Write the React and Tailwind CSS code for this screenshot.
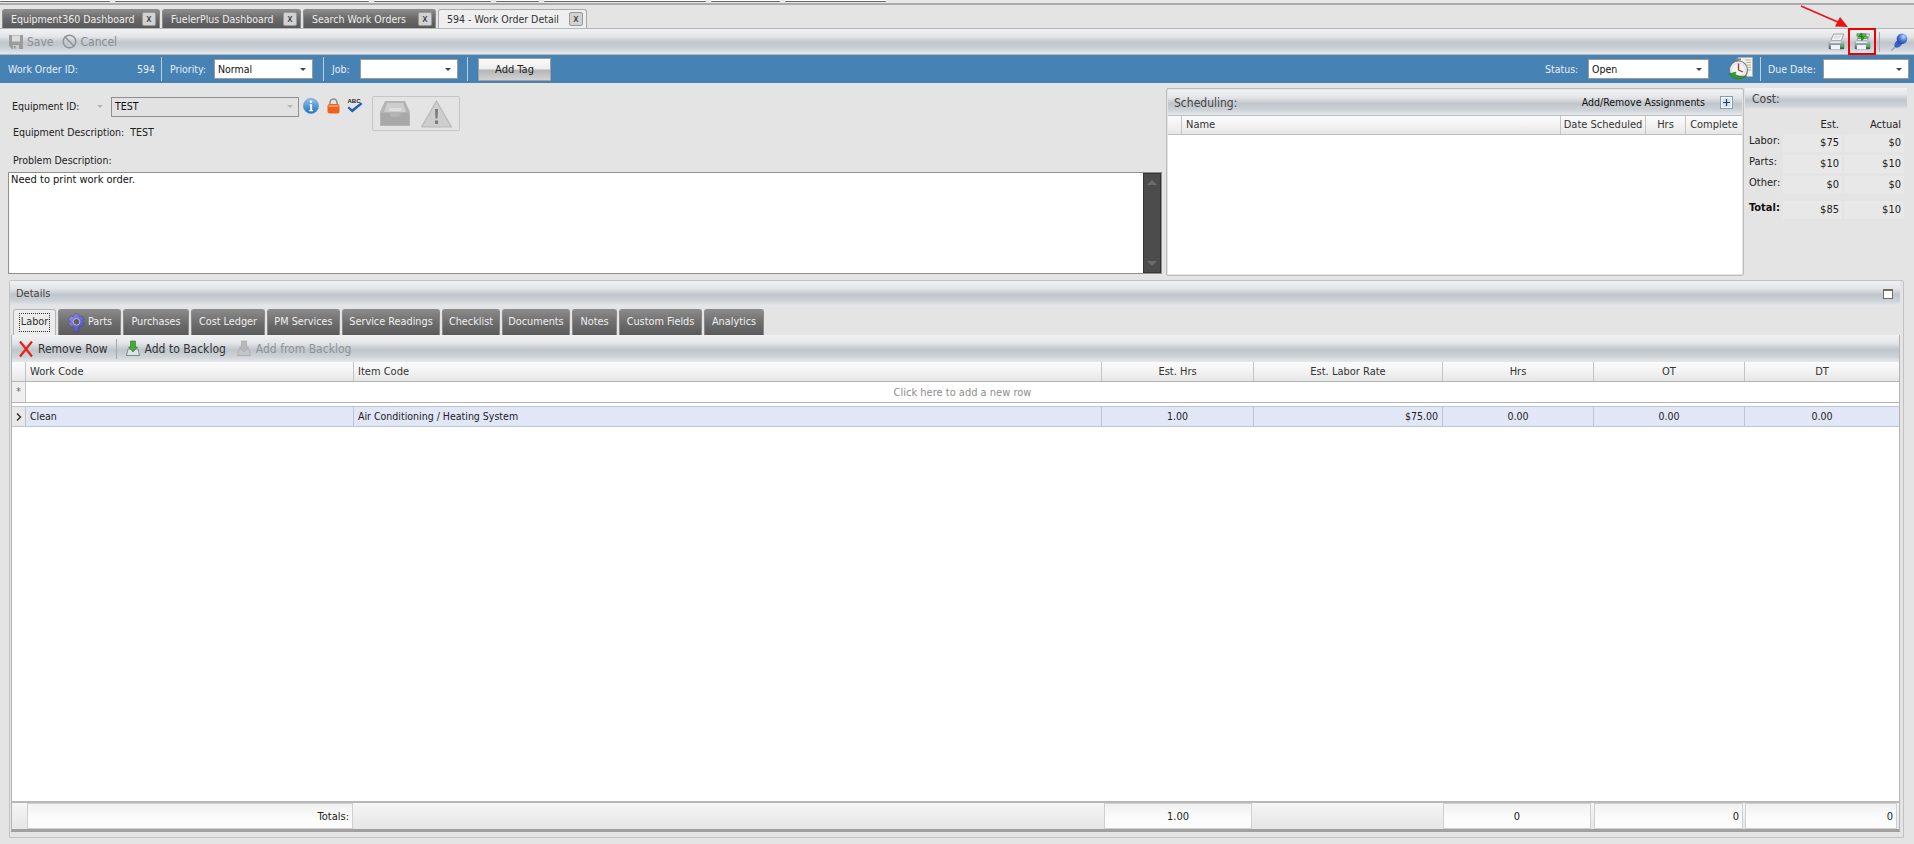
import { Ban } from 'lucide-react';

const bar = "bg-[linear-gradient(180deg,#f1f2f4_0%,#e3e5e8_30%,#c9ced3_48%,#bfc5cb_55%,#ced3d8_80%,#e6e8eb_100%)]";
const head = "bg-[linear-gradient(180deg,#fbfbfb_0%,#f3f3f3_50%,#e6e6e6_100%)]";

const topSegments = [110, 254, 117, 43, 162, 69, 101];
const pageTabs = [
  { label: 'Equipment360 Dashboard', w: 'w-[158px]' },
  { label: 'FuelerPlus Dashboard', w: 'w-[139px]' },
  { label: 'Search Work Orders', w: 'w-[133px]' },
  { label: '594 - Work Order Detail', w: 'w-[149px]', active: true },
];
const detailTabs = [
  { label: 'Parts', w: 'w-[63px]', gear: true },
  { label: 'Purchases', w: 'w-[66px]' },
  { label: 'Cost Ledger', w: 'w-[74px]' },
  { label: 'PM Services', w: 'w-[73px]' },
  { label: 'Service Readings', w: 'w-[98px]' },
  { label: 'Checklist', w: 'w-[58px]' },
  { label: 'Documents', w: 'w-[68px]' },
  { label: 'Notes', w: 'w-[45px]' },
  { label: 'Custom Fields', w: 'w-[83px]' },
  { label: 'Analytics', w: 'w-[60px]' },
];
const gridCols = "grid grid-cols-[14px_328px_748px_152px_189px_151px_151px_154px]";
const costRows = [
  { label: 'Labor:', est: '$75', actual: '$0', cls: 'mt-[1px]' },
  { label: 'Parts:', est: '$10', actual: '$10', cls: 'mt-[3px]' },
  { label: 'Other:', est: '$0', actual: '$0', cls: 'mt-[3px]' },
  { label: 'Total:', est: '$85', actual: '$10', cls: 'mt-[7px]', bold: true },
];

function Caret({ color = 'border-t-[#444]' }) {
  return <span className={`block h-0 w-0 border-x-[3px] border-t-[3px] border-x-transparent ${color}`} />;
}

function Select({ w, value }) {
  return (
    <div className={`flex h-[20px] ${w} items-center justify-between rounded-[1px] border border-[#9a9a9a] bg-white pl-[3px] pr-[6px] text-[#111]`}>
      <span>{value}</span>
      <Caret />
    </div>
  );
}

function Sep({ cls = 'bg-[#b9cfe2]' }) {
  return <span className={`block h-[24px] w-px ${cls}`} />;
}

function SaveIcon() {
  return (
    <svg width="16" height="16" viewBox="0 0 16 16">
      <path d="M1 1h14v14H4l-3-3z" fill="#9a9c9e" />
      <path d="M4 1.500h8v6H4z" fill="#dcdddd" />
      <path d="M5 11h6v4H5z" fill="#c9caca" />
      <path d="M6 12h1.500v2.500H6z" fill="#8d8f90" />
    </svg>
  );
}

function Printer({ dollar }) {
  const id = dollar ? 'pb2' : 'pb1';
  return (
    <svg width="17" height="17" viewBox="0 0 24 24">
      <defs>
        <linearGradient id={id} x1="0" y1="0" x2="0" y2="1">
          <stop offset="0" stopColor="#c2cbd4" />
          <stop offset="0.500" stopColor="#8b96a0" />
          <stop offset="1" stopColor="#3d4750" />
        </linearGradient>
      </defs>
      <path d="M8 1.500h14l-3 9H4z" fill="#f7f9fb" stroke="#717c87" strokeWidth="1" />
      <path d="M8.500 4.500h10M7.500 7h10" stroke="#b9c2cb" strokeWidth="1" />
      <path d="M1 10.500h22v10.500a2 2 0 0 1-2 2H3a2 2 0 0 1-2-2z" fill={`url(#${id})`} />
      <path d="M3 12h15v2H3z" fill="#eef1f4" />
      <path d="M4 17h13v6H4z" fill="#f2f4f6" />
      <path d="M18.500 16h3.500v3.500h-3.500z" fill="#1fdc1f" />
      {dollar && <path d="M4 1h13v3.500H4zM6 4.500h13v3.500H6z" fill="#6cc257" stroke="#2e7f2e" strokeWidth="0.700" />}
      {dollar && <path d="M11.500 1.500Q8 1 8 3.500q0 2 3 2t3 2q0 2-3.500 1.500M11 0v11" fill="none" stroke="#1f6a24" strokeWidth="1.300" />}
    </svg>
  );
}

function Pin() {
  return (
    <svg width="17" height="18" viewBox="0 0 17 18">
      <defs>
        <radialGradient id="pinb" cx="0.650" cy="0.300" r="0.750">
          <stop offset="0" stopColor="#c4d8fb" />
          <stop offset="0.500" stopColor="#4f7fe0" />
          <stop offset="1" stopColor="#1c3f9e" />
        </radialGradient>
      </defs>
      <path d="M0.500 17.500L6 12" stroke="#98a1ab" strokeWidth="1.500" />
      <ellipse cx="7.500" cy="10.500" rx="5" ry="3.200" transform="rotate(-45 7.500 10.500)" fill="#3560c4" />
      <circle cx="11" cy="5.800" r="5.300" fill="url(#pinb)" />
    </svg>
  );
}

function ClockDoc() {
  return (
    <svg width="25" height="24" viewBox="0 0 25 24">
      <path d="M10 0.500h14.500v19H10z" fill="#f3f1e8" stroke="#b5b1a0" strokeWidth="0.700" />
      <path d="M17 3h6M18 5.500h5M19 8h4M20 10.500h3M20 13h3" stroke="#a9a593" strokeWidth="0.800" />
      <circle cx="10.500" cy="13" r="9" fill="#f4f6f6" stroke="#6c7a84" strokeWidth="1.200" />
      <circle cx="10.500" cy="13" r="6.800" fill="none" stroke="#cdd5da" strokeWidth="0.800" />
      <path d="M10.500 13V6.500M10.500 13l4.500 2" stroke="#c9281d" strokeWidth="1.300" />
      <path d="M1 17q7 9 18 2-8 1-12-1.500l1-2.500z" fill="#2e9a2a" stroke="#1e6e1c" strokeWidth="0.500" />
      <path d="M8 1.500h5v2H8z" fill="#7a858c" />
    </svg>
  );
}

function InfoIcon() {
  return (
    <svg width="16" height="16" viewBox="0 0 16 16">
      <defs>
        <linearGradient id="infob" x1="0" y1="0" x2="0" y2="1">
          <stop offset="0" stopColor="#8fc3ee" />
          <stop offset="1" stopColor="#1f70bd" />
        </linearGradient>
      </defs>
      <circle cx="8" cy="8" r="7.600" fill="url(#infob)" stroke="#5b93c4" strokeWidth="0.600" />
      <circle cx="8" cy="3.800" r="1.300" fill="#fff" />
      <path d="M6.500 6.300h2.600v5.700h1v1.200H6.200V12h1V7.500h-.7z" fill="#fff" />
    </svg>
  );
}

function LockIcon() {
  return (
    <svg width="13" height="16" viewBox="0 0 13 16">
      <path d="M3 7V4.500a3.500 3.500 0 0 1 7 0V7" fill="none" stroke="#8b8f93" strokeWidth="1.600" />
      <rect x="0.500" y="6" width="12" height="9.500" rx="2" fill="#f0621c" />
      <path d="M1.500 7h10v2h-10z" fill="#f99662" />
    </svg>
  );
}

function SpellIcon() {
  return (
    <svg width="16" height="16" viewBox="0 0 16 16">
      <text x="0.500" y="5.500" fontSize="6" fontWeight="700" fill="#222" fontFamily="Liberation Sans, sans-serif">ABC</text>
      <path d="M2 9.500l3 2.800L13.800 5.500 15.500 7 5.200 15.500 0.500 11z" fill="#2458b8" />
    </svg>
  );
}

function InboxIcon() {
  return (
    <svg width="30" height="27" viewBox="0 0 30 27">
      <path d="M5 1h20l5 11v14H0V12z" fill="#b4b4b4" />
      <path d="M7 3h16l3 9H4z" fill="#cdcdcd" />
      <path d="M9 8h12v3H9z" fill="#dedede" />
      <path d="M1 13h8l2 4h8l2-4h8v12H1z" fill="#a8a8a8" />
    </svg>
  );
}

function WarnIcon() {
  return (
    <svg width="31" height="28" viewBox="0 0 31 28">
      <path d="M15.500 1L30.500 27H.500z" fill="#cdcdcd" stroke="#b8b8b8" strokeWidth="1.200" strokeLinejoin="round" />
      <path d="M14 9h3l-.5 9.500h-2zM14 20.500h3V24h-3z" fill="#7b7b7b" />
    </svg>
  );
}

function PlusBox() {
  return (
    <span className="relative block h-[13px] w-[13px] border border-[#7f9db9] bg-[#dbe3ec] shadow-[inset_0_0_0_1px_#fff]">
      <svg width="11" height="11" viewBox="0 0 11 11"><path d="M5.500 2v7M2 5.500h7" stroke="#1d3f73" strokeWidth="1.200" /></svg>
    </span>
  );
}

function GearIcon() {
  return (
    <svg width="19" height="20" viewBox="0 0 24 24">
      <defs>
        <linearGradient id="gearb" x1="0" y1="0" x2="1" y2="1">
          <stop offset="0" stopColor="#9b94f0" />
          <stop offset="1" stopColor="#4a43b0" />
        </linearGradient>
      </defs>
      <path d="M9.500 0.500h5l1 3.500 3.500-1 3 4.500-2.500 2.500 2.500 2.500-3 4.500-3.500-1-1 7h-5l-1-7-3.500 1-3-4.500L4.500 10 2 7.500l3-4.500 3.500 1z" fill="url(#gearb)" stroke="#3e3a92" strokeWidth="0.500" />
      <circle cx="12" cy="10.500" r="4.200" fill="#5e5e5e" stroke="#c9c6f4" strokeWidth="1" />
    </svg>
  );
}

function RedX() {
  return (
    <svg width="14" height="18" viewBox="0 0 14 18">
      <path d="M1 1.500l12 15M13 1.500l-12 15" stroke="#e3231b" strokeWidth="2.200" />
    </svg>
  );
}

function BacklogIcon({ muted }) {
  return (
    <svg width="14" height="17" viewBox="0 0 14 17">
      <path d="M2 9L0.500 15.500h13L12 9z" fill={muted ? '#c2c4c6' : '#dfe3e6'} stroke={muted ? '#a9abad' : '#6c7278'} strokeWidth="0.800" />
      <path d="M4.500 1h5v6h2L7 12 2.500 7h2z" fill={muted ? '#b7b9bb' : '#46a83a'} stroke={muted ? '#a3a5a7' : '#2f7a2a'} strokeWidth="0.600" />
    </svg>
  );
}

function GridHeadCell({ children, cls = '' }) {
  return <div className={`flex h-full items-center whitespace-nowrap border-r border-[#c4c4c4] px-[4px] pb-px text-[11px] text-[#333] ${cls}`}>{children}</div>;
}

function TotalCell({ w, align, children }) {
  return (
    <div className={`flex h-[26px] ${w} items-center ${align} border border-[#cfcfcf] bg-[linear-gradient(180deg,#f1f1f1_0%,#fcfcfc_60%,#fbfbfb_100%)] px-[3px] text-[11px] text-[#222]`}>
      {children}
    </div>
  );
}

export default function App() {
  return (
    <div className="relative flex h-[844px] w-[1914px] flex-col overflow-hidden bg-[#e4e4e4] font-['DejaVu_Sans_Condensed','Liberation_Sans',sans-serif] text-[10.5px] leading-none text-[#333]">
      {/* what is left of the window's own tab strip */}
      <div className="flex h-[5px] gap-[5px] border-b-2 border-[#a9abad] bg-[#e8e8e8]">
        {topSegments.map((w, i) => (
          <span key={i} style={{ width: w }} className="block h-[2px] rounded-b-[1px] border-b border-[#666] bg-white" />
        ))}
      </div>

      <div className="flex h-[23px] items-end gap-[2px] pl-[2px]">
        {pageTabs.map((t) => (
          <div
            key={t.label}
            className={`flex h-[19px] ${t.w} items-center justify-between rounded-t-[3px] border border-b-0 pl-[8px] pr-[3px] ${
              t.active ? 'border-[#a8a8a8] bg-[#efefef] text-[#333]' : 'border-[#8a8a8a] bg-[linear-gradient(180deg,#8c8c8c_0%,#6a6a6a_45%,#585858_100%)] text-[#eeeeee]'
            }`}
          >
            <span>{t.label}</span>
            <span className="flex h-[14px] w-[14px] items-center justify-center rounded-[2px] border border-[#9a9a9a] bg-[#d2d2d2] text-[10px] text-[#222]">x</span>
          </div>
        ))}
      </div>

      <div className={`flex h-[27px] items-center justify-between border-y border-[#b4b6b9] pl-[8px] ${bar}`}>
        <div className="flex items-center text-[12px] text-[#8b8d8f]">
          <SaveIcon />
          <span className="ml-[3px]">Save</span>
          <Ban size={15} strokeWidth={2.400} className="ml-[8px] text-[#8f9295]" />
          <span className="ml-[4px]">Cancel</span>
        </div>
        <div className="flex h-full items-center">
          <Printer />
          <div className="ml-[3px] flex h-[27px] w-[28px] items-center justify-center border-2 border-[#ee0000]">
            <Printer dollar />
          </div>
          <span className="mx-[3px] block h-[20px] w-px bg-[#a9adb1]" />
          <span className="ml-[8px] mr-[6px] block"><Pin /></span>
        </div>
      </div>

      <div className="flex h-[28px] items-center justify-between bg-[#4682b4] pl-[8px] text-[#e8eef4]">
        <div className="flex items-center">
          <span className="w-[125px]">Work Order ID:</span>
          <span className="w-[22px] text-right">594</span>
          <span className="ml-[6px] mr-[8px]"><Sep /></span>
          <span className="w-[44px]">Priority:</span>
          <Select w="w-[99px]" value="Normal" />
          <span className="ml-[10px] mr-[8px]"><Sep /></span>
          <span className="w-[28px]">Job:</span>
          <Select w="w-[98px]" value="" />
          <span className="ml-[9px] mr-[10px]"><Sep /></span>
          <button className="flex h-[23px] w-[73px] items-center justify-center border border-[#a0a0a0] bg-[linear-gradient(180deg,#fafafa_0%,#eeeeee_48%,#b4b4b4_52%,#d2d2d2_100%)] text-[11px] text-[#222]">Add Tag</button>
        </div>
        <div className="flex items-center pr-[5px]">
          <span className="w-[43px]">Status:</span>
          <Select w="w-[121px]" value="Open" />
          <span className="ml-[19px] block"><ClockDoc /></span>
          <span className="ml-[7px] mr-[7px]"><Sep /></span>
          <span className="w-[55px]">Due Date:</span>
          <Select w="w-[86px]" value="" />
        </div>
      </div>

      <div className="flex h-[197px] pl-[8px]">
        <div className="flex w-[1154px] flex-col">
          <div className="mt-[13px] flex h-[44px] items-start pl-[4px]">
            <div className="flex w-[292px] flex-col">
              <div className="mt-[1px] flex h-[19px] items-center">
                <span className="w-[85px] text-[#222]">Equipment ID:</span>
                <Caret color="border-t-[#b5b5b5]" />
                <div className="ml-[8px] flex h-[20px] w-[188px] items-center justify-between border border-[#8f8f8f] bg-[#e2e2e2] pl-[3px] pr-[5px] text-[#111]">
                  <span>TEST</span>
                  <Caret color="border-t-[#b5b5b5]" />
                </div>
              </div>
              <div className="mt-[11px] flex pl-[1px] text-[#222]">
                <span>Equipment Description:</span>
                <span className="ml-[6px]">TEST</span>
              </div>
            </div>
            <div className="ml-[-1px] mt-[2px]"><InfoIcon /></div>
            <div className="ml-[8px] mt-[2px]"><LockIcon /></div>
            <div className="ml-[7px] mt-[1px]"><SpellIcon /></div>
            <div className="ml-[9px] flex h-[35px] w-[88px] items-center justify-between rounded-[2px] border border-[#c6c6c6] pl-[7px] pr-[7px]">
              <InboxIcon />
              <WarnIcon />
            </div>
          </div>
          <div className="mt-[15px] pl-[5px] text-[#222]">Problem Description:</div>
          <div className="mt-[6px] flex h-[102px] border border-[#8f8f8f] bg-white">
            <div className="flex-1 pl-[2px] pt-px text-[11px] text-[#111]">Need to print work order.</div>
            <div className="flex w-[18px] flex-col items-center justify-between border border-[#333] bg-[#4c4c4c] py-[6px]">
              <span className="block h-0 w-0 border-x-[5px] border-b-[5px] border-x-transparent border-b-[#6b6b6b]" />
              <span className="block h-0 w-0 border-x-[5px] border-t-[5px] border-x-transparent border-t-[#6b6b6b]" />
            </div>
          </div>
        </div>

        <div className="ml-[4px] mt-[5px] flex h-[188px] w-[578px] flex-col rounded-[2px] border border-[#bdbdbd] p-px">
          <div className={`flex h-[25px] flex-none items-center justify-between pl-[6px] pr-[9px] ${bar}`}>
            <span className="text-[12px] text-[#444]">Scheduling:</span>
            <div className="flex items-center">
              <span className="text-[#111]">Add/Remove Assignments</span>
              <span className="ml-[15px] block"><PlusBox /></span>
            </div>
          </div>
          <div className={`grid h-[20px] flex-none grid-cols-[14px_379px_85px_40px_56px] border-y border-[#bdbdbd] ${head}`}>
            <GridHeadCell />
            <GridHeadCell>Name</GridHeadCell>
            <GridHeadCell cls="justify-center">Date Scheduled</GridHeadCell>
            <GridHeadCell cls="justify-center">Hrs</GridHeadCell>
            <GridHeadCell cls="justify-center border-r-0">Complete</GridHeadCell>
          </div>
          <div className="flex-1 bg-white" />
        </div>

        <div className="ml-px mt-[5px] w-[162px] text-[11px]">
          <div className={`flex h-[22px] items-center pl-[7px] text-[12px] text-[#444] ${bar}`}>Cost:</div>
          <div className="mt-[9px] flex justify-end pr-[6px] text-[#222]">
            <span className="w-[50px] text-right">Est.</span>
            <span className="ml-[2px] w-[60px] text-right">Actual</span>
          </div>
          <div className="mt-[3px] flex flex-col pl-[4px] text-[#222]">
            {costRows.map((r) => (
              <div key={r.label} className={`flex h-[18px] items-start ${r.cls}`}>
                <span className={`w-[34px] pt-px ${r.bold ? 'font-bold text-[#111]' : ''}`}>{r.label}</span>
                <span className="flex h-full w-[59px] items-center justify-end bg-[#e8e8e8] pb-px pr-[3px]">{r.est}</span>
                <span className="ml-[2px] flex h-full w-[60px] items-center justify-end bg-[#e8e8e8] pb-px pr-[3px]">{r.actual}</span>
              </div>
            ))}
          </div>
        </div>
      </div>

      <div className="ml-[9px] flex h-[558px] w-[1895px] flex-col rounded-t-[2px] border border-[#c2c2c2] pb-[5px] pr-[3px]">
        <div className={`flex h-[25px] flex-none items-center justify-between pl-[6px] pr-[7px] text-[11px] ${bar}`}>
          <span className="text-[#444]">Details</span>
          <span className="block h-[10px] w-[10px] border border-[#6d6d60] bg-white shadow-[inset_0_1px_0_#6d6d60]" />
        </div>

        <div className="mt-[3px] flex h-[26px] flex-none items-end gap-[2px] pl-[3px] text-[10.8px]">
          <div className="flex h-[26px] w-[43px] items-center justify-center rounded-t-[3px] border border-b-0 border-[#b5b5b5] bg-[#ececec]">
            <span className="border border-dotted border-[#333] px-px py-[3px] text-[#333]">Labor</span>
          </div>
          {detailTabs.map((t) => (
            <div key={t.label} className={`flex h-[26px] ${t.w} items-center justify-center gap-[2px] rounded-t-[3px] border border-b-0 border-[#8a8a8a] bg-[linear-gradient(180deg,#8a8a8a_0%,#6e6e6e_50%,#5a5a5a_100%)] text-[#efefef]`}>
              {t.gear && <GearIcon />}
              {t.label}
            </div>
          ))}
        </div>

        <div className="ml-px flex min-h-0 flex-1 flex-col border-x border-b-[3px] border-[#b4b4b4] border-b-[#a0a0a0]">
          <div className={`flex h-[27px] flex-none items-center pl-[7px] text-[12px] ${bar}`}>
            <RedX />
            <span className="ml-[5px] text-[#333]">Remove Row</span>
            <span className="ml-[8px] block h-[20px] w-px bg-[#a5a8ab]" />
            <span className="ml-[9px] block"><BacklogIcon /></span>
            <span className="ml-[5px] text-[#333]">Add to Backlog</span>
            <span className="ml-[11px] block"><BacklogIcon muted /></span>
            <span className="ml-[5px] text-[#909296]">Add from Backlog</span>
          </div>

          <div className={`${gridCols} h-[20px] flex-none border-b border-[#b5b5b5] ${head}`}>
            <GridHeadCell />
            <GridHeadCell>Work Code</GridHeadCell>
            <GridHeadCell>Item Code</GridHeadCell>
            <GridHeadCell cls="justify-center">Est. Hrs</GridHeadCell>
            <GridHeadCell cls="justify-center">Est. Labor Rate</GridHeadCell>
            <GridHeadCell cls="justify-center">Hrs</GridHeadCell>
            <GridHeadCell cls="justify-center">OT</GridHeadCell>
            <GridHeadCell cls="justify-center border-r-0">DT</GridHeadCell>
          </div>

          <div className="flex h-[21px] flex-none border-b border-[#b5b5b5] bg-white">
            <div className="flex w-[14px] items-center justify-center border-r border-[#c4c4c4] bg-[#efefef] text-[10px] text-[#666]">*</div>
            <div className="flex flex-1 items-center justify-center text-[11px] text-[#8e8e8e]">Click here to add a new row</div>
          </div>
          <div className="h-[3px] flex-none bg-white" />

          <div className={`${gridCols} h-[21px] flex-none border-y border-[#bcc5dc] bg-[#e1e7f6] text-[#222]`}>
            <div className="flex items-center justify-center border-r border-[#c4c4c4] bg-[#e9e9e9]">
              <svg width="6" height="8" viewBox="0 0 6 8"><path d="M1 0.500L4.500 4 1 7.500" fill="none" stroke="#333" strokeWidth="1.500" /></svg>
            </div>
            <div className="flex items-center border-r border-[#bcc5dc] px-[4px]">Clean</div>
            <div className="flex items-center border-r border-[#bcc5dc] px-[4px]">Air Conditioning / Heating System</div>
            <div className="flex items-center justify-center border-r border-[#bcc5dc]">1.00</div>
            <div className="flex items-center justify-end border-r border-[#bcc5dc] pr-[4px]">$75.00</div>
            <div className="flex items-center justify-center border-r border-[#bcc5dc]">0.00</div>
            <div className="flex items-center justify-center border-r border-[#bcc5dc]">0.00</div>
            <div className="flex items-center justify-center">0.00</div>
          </div>

          <div className="min-h-0 flex-1 bg-white" />

          <div className="flex h-[28px] flex-none items-center border-t-2 border-[#b8b8b8] bg-[linear-gradient(180deg,#f5f5f5_0%,#e6e6e6_100%)] pl-[15px]">
            <TotalCell w="w-[326px]" align="justify-end">Totals:</TotalCell>
            <div className="w-[751px]" />
            <TotalCell w="w-[148px]" align="justify-center">1.00</TotalCell>
            <div className="w-[191px]" />
            <TotalCell w="w-[148px]" align="justify-center">0</TotalCell>
            <div className="w-[3px]" />
            <TotalCell w="w-[149px]" align="justify-end">0</TotalCell>
            <div className="w-[2px]" />
            <TotalCell w="w-[152px]" align="justify-end">0</TotalCell>
          </div>
        </div>
      </div>

      {/* annotation arrow pointing at the print button */}
      <svg className="absolute left-[1798px] top-[3px]" width="54" height="28" viewBox="0 0 54 28">
        <path d="M3 3L42 20" stroke="#ee1111" strokeWidth="1.600" />
        <path d="M50 24L37 23.500 42 14z" fill="#ee1111" />
      </svg>
    </div>
  );
}
